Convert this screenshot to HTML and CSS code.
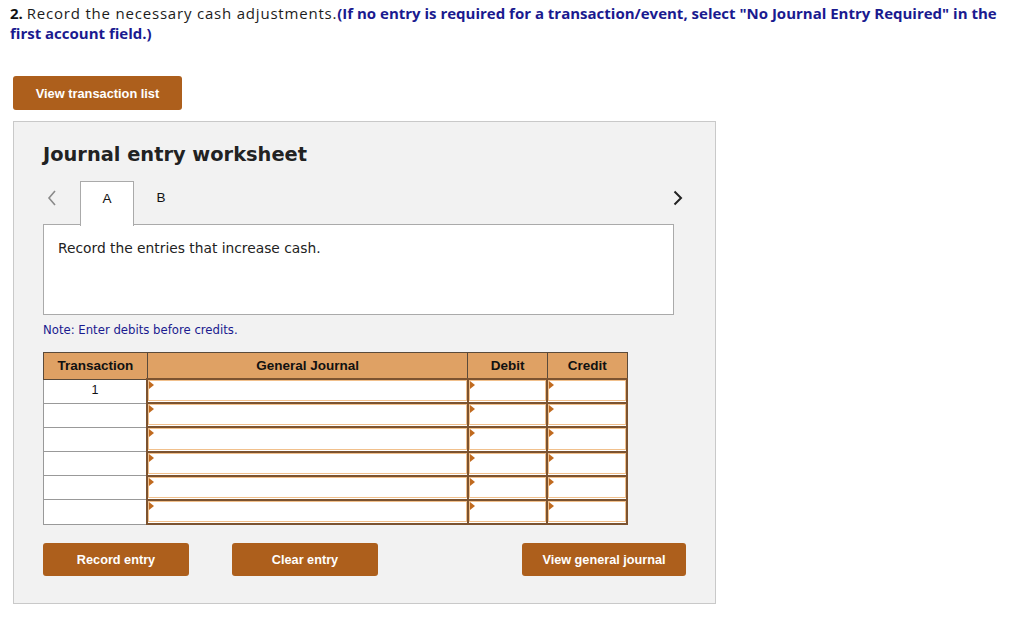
FILE: index.html
```html
<!DOCTYPE html>
<html lang="en">
<head>
    <meta charset="UTF-8">
    <title>Journal Entry Worksheet</title>
    <link rel="stylesheet" href="styles.css">
</head>
<body>
    <p class="question"><strong>2.</strong> <span class="lead">Record the necessary cash adjustments.</span><span class="hint">(If no entry is required for a transaction/event, select "No Journal Entry Required" in the</span><br><span class="hint">first account field.)</span></p>

    <button class="btn btn-list">View transaction list</button>

    <div class="worksheet">
        <h2>Journal entry worksheet</h2>

        <div class="tabs">
            <span class="nav nav-prev">
                <svg width="10" height="16" viewBox="0 0 10 16"><path d="M8 1 L2 8 L8 15" fill="none" stroke="#8a8a8a" stroke-width="1.6"/></svg>
            </span>
            <span class="tab active">A</span>
            <span class="tab">B</span>
            <span class="nav nav-next">
                <svg width="12" height="16" viewBox="0 0 12 16"><path d="M2.5 1.5 L9 8 L2.5 14.5" fill="none" stroke="#222" stroke-width="2"/></svg>
            </span>
        </div>

        <div class="tab-body">Record the entries that increase cash.</div>

        <p class="note">Note: Enter debits before credits.</p>

        <table class="journal">
            <thead>
                <tr>
                    <th class="col-trans">Transaction</th>
                    <th class="col-acct">General Journal</th>
                    <th class="col-amt">Debit</th>
                    <th class="col-amt">Credit</th>
                </tr>
            </thead>
            <tbody>
                <tr>
                    <td class="trans">1</td>
                    <td class="field"><div></div></td>
                    <td class="field"><div></div></td>
                    <td class="field"><div></div></td>
                </tr>
                <tr>
                    <td class="trans"></td>
                    <td class="field"><div></div></td>
                    <td class="field"><div></div></td>
                    <td class="field"><div></div></td>
                </tr>
                <tr>
                    <td class="trans"></td>
                    <td class="field"><div></div></td>
                    <td class="field"><div></div></td>
                    <td class="field"><div></div></td>
                </tr>
                <tr>
                    <td class="trans"></td>
                    <td class="field"><div></div></td>
                    <td class="field"><div></div></td>
                    <td class="field"><div></div></td>
                </tr>
                <tr>
                    <td class="trans"></td>
                    <td class="field"><div></div></td>
                    <td class="field"><div></div></td>
                    <td class="field"><div></div></td>
                </tr>
                <tr>
                    <td class="trans"></td>
                    <td class="field"><div></div></td>
                    <td class="field"><div></div></td>
                    <td class="field"><div></div></td>
                </tr>
            </tbody>
        </table>

        <div class="actions">
            <button class="btn btn-record">Record entry</button>
            <button class="btn btn-clear">Clear entry</button>
            <button class="btn btn-view">View general journal</button>
        </div>
    </div>
</body>
</html>
```

FILE: styles.css
```css
body {
    margin: 0;
    padding: 3px 13px 0 10px;
    font-family: 'Open Sans', 'Liberation Sans', sans-serif;
    background: #fff;
    color: #111;
}

.question {
    margin: 0;
    font-size: 15px;
    line-height: 20px;
    width: 1000px;
}

.question strong {
    font-weight: 700;
}

.lead {
    letter-spacing: 0.8px;
    color: #1c1c1c;
}

.hint {
    color: #1a1a8f;
    font-weight: 700;
}

.btn {
    background: #ad5f1c;
    color: #fff;
    border: none;
    border-radius: 3px;
    font-family: 'Liberation Sans', Arial, sans-serif;
    font-weight: bold;
    font-size: 12.7px;
    height: 34px;
    cursor: pointer;
    padding: 0;
}

.btn-list {
    margin: 33px 0 0 3px;
    width: 169px;
    display: block;
    font-size: 12.8px;
}

.worksheet {
    margin: 11px 0 0 3px;
    width: 672px;
    height: 481px;
    background: #f2f2f2;
    border: 1px solid #c9c9c9;
    padding: 0 0 0 29px;
}

.worksheet h2 {
    margin: 21px 0 0 0;
    font-family: 'DejaVu Sans', Verdana, sans-serif;
    font-size: 19.4px;
    line-height: 24px;
    color: #222;
}

.tabs {
    display: flex;
    align-items: stretch;
    height: 44px;
    margin-top: 14px;
    width: 641px;
    position: relative;
    z-index: 1;
}

.nav {
    display: flex;
    align-items: center;
    padding-bottom: 10px;
}

.nav-prev {
    width: 37px;
    padding-left: 4px;
    box-sizing: border-box;
}

.nav-next {
    margin-left: auto;
}

.tab {
    width: 54px;
    display: flex;
    align-items: center;
    justify-content: center;
    font-family: 'Liberation Sans', Arial, sans-serif;
    font-size: 13.5px;
    color: #111;
    box-sizing: border-box;
    padding-bottom: 11px;
}

.tab.active {
    background: #fff;
    border: 1px solid #aaa;
    border-bottom: none;
    height: 45px;
}

.tab-body {
    margin-top: -1px;
    width: 631px;
    height: 91px;
    box-sizing: border-box;
    background: #fff;
    border: 1px solid #aaa;
    padding: 15px 14px;
    font-family: 'DejaVu Sans', Verdana, sans-serif;
    font-size: 13.8px;
    color: #222;
}

.note {
    margin: 8px 0 0 0;
    font-family: 'DejaVu Sans', Verdana, sans-serif;
    font-size: 11.7px;
    color: #1a1a8f;
    line-height: 15px;
}

.journal {
    margin-top: 14px;
    border-collapse: collapse;
    width: 585px;
    font-family: 'Liberation Sans', Arial, sans-serif;
}

.journal th {
    background: #dfa164;
    border: 1px solid #5a4a3a;
    height: 25px;
    font-size: 13.5px;
    font-weight: bold;
    color: #111;
    padding: 0;
}

.col-trans { width: 103px; }
.col-acct { width: 323px; }
.col-amt { width: 79px; }

.journal td {
    padding: 0;
}

.journal td.trans {
    background: #fff;
    border: 1px solid #999;
    text-align: center;
    font-size: 12.5px;
    vertical-align: top;
    padding-top: 3px;
    height: 20.2px;
    line-height: 15px;
}

.journal td.field {
    border: 2px solid #7c5330;
    background: #fff;
    position: relative;
    vertical-align: top;
}

.journal td.field div {
    height: 19.2px;
    border: 1px solid #f1c08c;
}

.journal td.field::before {
    content: '';
    position: absolute;
    top: 1px;
    left: 1px;
    border-top: 4px solid transparent;
    border-bottom: 4px solid transparent;
    border-left: 5px solid #c06a1f;
}

.actions {
    display: flex;
    margin-top: 18px;
}

.btn-record,
.btn-clear {
    width: 146px;
    height: 33px;
}

.btn-clear {
    margin-left: 43px;
}

.btn-view {
    width: 164px;
    height: 33px;
    margin-left: 144px;
}
```
